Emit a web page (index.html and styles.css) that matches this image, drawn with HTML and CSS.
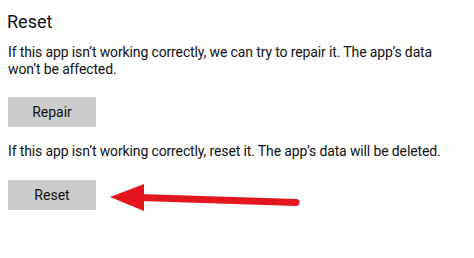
FILE: index.html
```html
<!DOCTYPE html>
<html>
<head>
<meta charset="utf-8">
<link rel="stylesheet" href="styles.css">
</head>
<body>
<div class="panel">
  <h2 class="title">Reset</h2>
  <p class="desc">If this app isn’t working correctly, we can try to repair it. The app’s data won’t be affected.</p>
  <button class="btn btn-repair">Repair</button>
  <p class="desc desc-reset">If this app isn’t working correctly, reset it. The app’s data will be deleted.</p>
  <button class="btn btn-reset">Reset</button>
  <svg class="arrow" width="474" height="258" viewBox="0 0 474 258">
    <line x1="140" y1="197.5" x2="296" y2="202.5" stroke="#e3161f" stroke-width="7" stroke-linecap="round"/>
    <polygon points="110,197 144,184 144,211" fill="#e3161f"/>
  </svg>
</div>
</body>
</html>
```
FILE: styles.css
```css
html, body {
  margin: 0;
  padding: 0;
  background: #ffffff;
}
body {
  width: 474px;
  height: 258px;
  overflow: hidden;
  font-family: Roboto, "Liberation Sans", sans-serif;
  color: #111;
}
.panel {
  position: relative;
  box-sizing: border-box;
  padding: 10px 0 0 8px;
  height: 258px;
}
.title {
  margin: 0 0 0 -1px;
  font-size: 18px;
  font-weight: 400;
  line-height: 24px;
}
.desc {
  margin: 10px 0 0 0;
  font-size: 14px;
  line-height: 17px;
  letter-spacing: -0.13px;
  width: 440px;
}
.btn {
  display: block;
  width: 88px;
  height: 30px;
  border: none;
  background: #cccccc;
  font-family: inherit;
  font-size: 14px;
  color: #111;
  padding: 0;
}
.btn-repair {
  margin-top: 19px;
}
.desc-reset {
  margin-top: 16px;
}
.btn-reset {
  margin-top: 20px;
}
.arrow {
  position: absolute;
  left: 0;
  top: 0;
}
```
